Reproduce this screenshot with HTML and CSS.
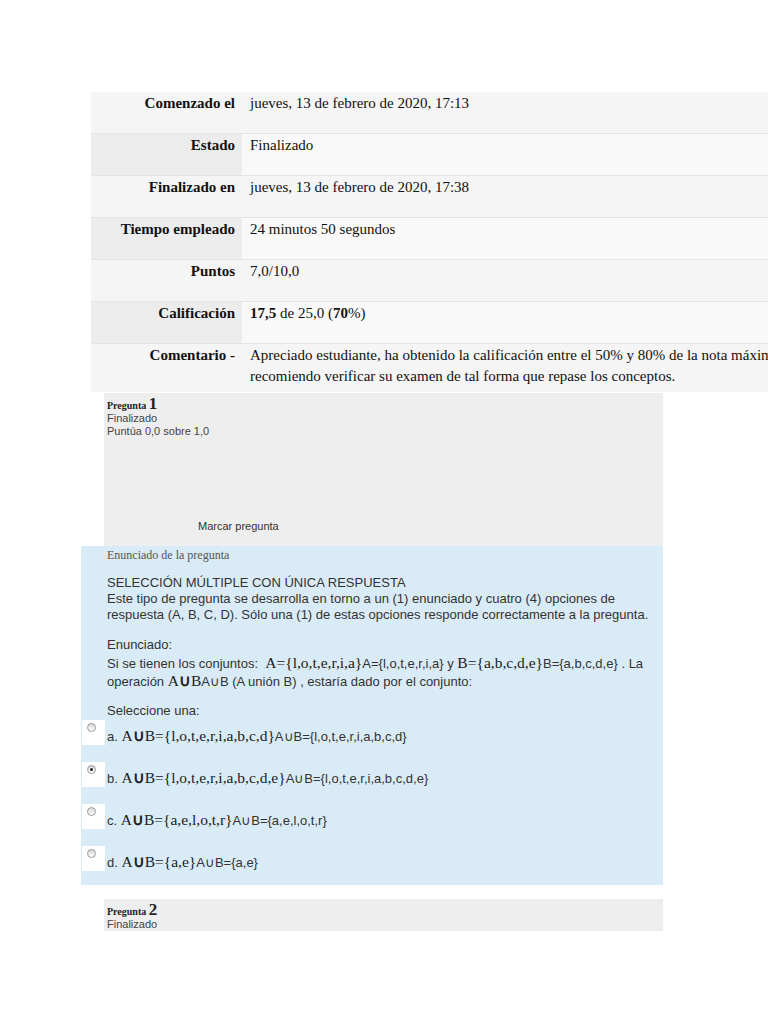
FILE: index.html
```html
<!DOCTYPE html>
<html lang="es">
<head>
<meta charset="utf-8">
<title>Revisión del intento</title>
<link rel="stylesheet" href="styles.css">
</head>
<body>
<div class="page">
  <div class="summary">
    <div class="row odd"><div class="th">Comenzado el</div><div class="td">jueves, 13 de febrero de 2020, 17:13</div></div>
    <div class="row even"><div class="th">Estado</div><div class="td">Finalizado</div></div>
    <div class="row odd"><div class="th">Finalizado en</div><div class="td">jueves, 13 de febrero de 2020, 17:38</div></div>
    <div class="row even"><div class="th">Tiempo empleado</div><div class="td">24 minutos 50 segundos</div></div>
    <div class="row odd"><div class="th">Puntos</div><div class="td">7,0/10,0</div></div>
    <div class="row even"><div class="th">Calificación</div><div class="td"><b>17,5</b> de 25,0 (<b>70</b>%)</div></div>
    <div class="row odd"><div class="th">Comentario -</div><div class="td">Apreciado estudiante, ha obtenido la calificación entre el 50% y 80% de la nota máxima, le<br>recomiendo verificar su examen de tal forma que repase los conceptos.</div></div>
  </div>

  <div class="que">
    <div class="info tall">
      <h3 class="no">Pregunta <span class="qno">1</span></h3>
      <div class="state">Finalizado</div>
      <div class="grade">Puntúa 0,0 sobre 1,0</div>
      <div class="flag">Marcar pregunta</div>
    </div>
    <div class="content">
      <div class="ctitle">Enunciado de la pregunta</div>
      <p class="p1">SELECCIÓN MÚLTIPLE CON ÚNICA RESPUESTA<br>Este tipo de pregunta se desarrolla en torno a un (1) enunciado y cuatro (4) opciones de<br>respuesta (A, B, C, D). Sólo una (1) de estas opciones responde correctamente a la pregunta.</p>
      <p class="p2">Enunciado:<br>Si se tienen los conjuntos:&nbsp; <span class="m">A={l,o,t,e,r,i,a}</span><span class="ms">A={l,o,t,e,r,i,a}</span> y <span class="m">B={a,b,c,d,e}</span><span class="ms">B={a,b,c,d,e}</span> . La<br>operación <span class="m">A<b>∪</b>B</span><span class="ms">A∪B</span> (A unión B) , estaría dado por el conjunto:</p>
      <p class="p3">Seleccione una:</p>
      <div class="opt"><span class="rbox"><span class="radio"></span></span><span class="lab">a. <span class="m">A<b>∪</b>B={l,o,t,e,r,i,a,b,c,d}</span><span class="ms">A∪B={l,o,t,e,r,i,a,b,c,d}</span></span></div>
      <div class="opt"><span class="rbox"><span class="radio on"></span></span><span class="lab">b. <span class="m">A<b>∪</b>B={l,o,t,e,r,i,a,b,c,d,e}</span><span class="ms">A∪B={l,o,t,e,r,i,a,b,c,d,e}</span></span></div>
      <div class="opt"><span class="rbox"><span class="radio"></span></span><span class="lab">c. <span class="m">A<b>∪</b>B={a,e,l,o,t,r}</span><span class="ms">A∪B={a,e,l,o,t,r}</span></span></div>
      <div class="opt"><span class="rbox"><span class="radio"></span></span><span class="lab">d. <span class="m">A<b>∪</b>B={a,e}</span><span class="ms">A∪B={a,e}</span></span></div>
    </div>
  </div>

  <div class="que q2">
    <div class="info">
      <h3 class="no">Pregunta <span class="qno">2</span></h3>
      <div class="state">Finalizado</div>
    </div>
  </div>
</div>
</body>
</html>
```
FILE: styles.css
```css
html, body {
  margin: 0;
  padding: 0;
  overflow: hidden;
  background: #ffffff;
}
body {
  font-family: "Liberation Serif", "Times New Roman", serif;
  color: #111;
}
.page {
  padding-top: 92px;
  width: 768px;
}
.summary {
  margin-left: 91px;
  width: 760px;
  font-size: 15px;
  line-height: 21px;
}
.row {
  display: grid;
  grid-template-columns: 151px 1fr;
  border-top: 1px solid #e4e4e4;
  min-height: 41px;
}
.row:first-child {
  border-top: none;
  min-height: 41px;
}
.th {
  font-weight: bold;
  text-align: right;
  padding: 1px 7px 5px 0;
}
.td {
  padding: 1px 0 5px 8px;
  white-space: nowrap;
}
.odd .th, .odd .td { background: #f5f5f5; }
.even .th { background: #ececec; }
.even .td { background: #f9f9f9; }

.que {
  margin-left: 81px;
  width: 582px;
  margin-top: 1px;
}
.info {
  margin-left: 23px;
  background: #eeeeee;
  padding: 2px 3px 0;
  font-family: "Liberation Sans", Arial, sans-serif;
  color: #444;
  font-size: 11px;
}
.info.tall { padding-bottom: 13px; }
.no {
  margin: 0;
  height: 17px;
  overflow: hidden;
  font-family: "Liberation Serif", "Times New Roman", serif;
  font-weight: bold;
  font-size: 10px;
  line-height: 17px;
  color: #222;
}
.qno { font-size: 17px; line-height: 1; }
.state, .grade, .flag { line-height: 13px; }
.flag {
  margin-top: 82px;
  padding-left: 91px;
  color: #333;
}
.content {
  background: #d9ebf6;
  padding: 2px 0 14px 26px;
  font-family: "Liberation Sans", Arial, sans-serif;
  font-size: 13px;
  color: #333;
}
.ctitle {
  font-family: "Liberation Serif", "Times New Roman", serif;
  font-size: 12px;
  line-height: 15px;
  color: #555;
}
.content p { margin: 0; }
.p1 { margin-top: 12px !important; line-height: 16px; }
.p2 { margin-top: 13px !important; line-height: 18.5px; }
.p3 { margin-top: 9px !important; line-height: 19px; }
.m {
  font-family: "Liberation Serif", "Times New Roman", serif;
  font-size: 15.5px;
  line-height: 1;
  color: #222;
}
.m b { font-weight: bold; }
.ms { font-size: 13px; line-height: 1; }
.opt {
  display: flex;
  align-items: flex-end;
  margin-left: -26px;
  margin-bottom: 17px;
}
.opt:last-child { margin-bottom: 0; }
.rbox {
  width: 23px;
  height: 25px;
  background: #ffffff;
  position: relative;
  flex: none;
  margin-left: 1px;
}
.radio {
  position: absolute;
  left: 5px;
  top: 3px;
  width: 9px;
  height: 9px;
  border-radius: 50%;
  border: 1px solid #9a9a9a;
  background: linear-gradient(#d8d8d8, #ffffff);
  box-sizing: border-box;
}
.radio.on::after {
  content: "";
  position: absolute;
  left: 2px;
  top: 2px;
  width: 3px;
  height: 3px;
  border-radius: 50%;
  background: #222;
}
.lab {
  line-height: 19px;
  padding-left: 2px;
  margin-bottom: -1px;
}
.q2 { margin-top: 14px; }
```
